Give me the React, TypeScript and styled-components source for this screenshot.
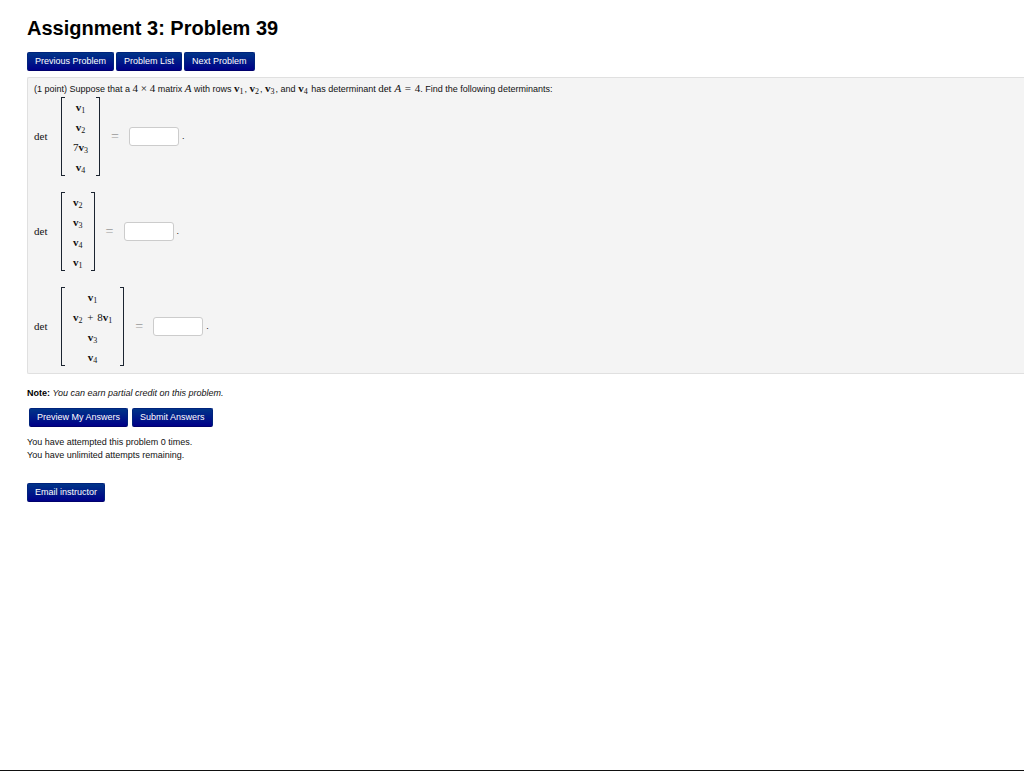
import React from "react";
import styled, { createGlobalStyle } from "styled-components";

const GlobalStyle = createGlobalStyle`
  *, *::before, *::after { box-sizing: border-box; }
  body {
    margin: 0;
    background: #fff;
    color: #111;
    font-family: "Liberation Sans", Arial, sans-serif;
    font-size: 9px;
    line-height: 13px;
  }
`;

const Page = styled.main`
  display: flex;
  flex-direction: column;
  align-items: flex-start;
  min-height: 100vh;
  padding: 16px 0 16px 27px;
  border-bottom: 1px solid #111;
`;

const Title = styled.h1`
  margin: 0 0 12px;
  color: #000;
  font-size: 20px;
  line-height: 24px;
`;

const ButtonRow = styled.div<{ $gap: number; $inset?: boolean }>`
  display: flex;
  gap: ${(p) => p.$gap}px;
  padding-left: ${(p) => (p.$inset ? 2 : 0)}px;
`;

const Button = styled.button`
  height: 19px;
  padding: 0 7px;
  border: 1px solid #00237c;
  border-bottom-color: #00006c;
  border-radius: 2px;
  background: linear-gradient(#003488, #000088);
  color: #fff;
  font: inherit;
  line-height: 17px;
  white-space: nowrap;
`;

const Panel = styled.section`
  align-self: stretch;
  margin: 6px 0 13px;
  padding: 5px 6px 7px;
  border: 1px solid #e0e0e0;
  border-right: 0;
  border-radius: 2px 0 0 2px;
  background: #f4f4f4;
`;

const Statement = styled.p`
  margin: 0 0 1px;
`;

const MathText = styled.span`
  color: #111;
  font-family: "Liberation Serif", "Times New Roman", serif;
  font-size: 11px;
  line-height: 1;
  white-space: nowrap;
`;

const Vector = styled(MathText)`
  padding-right: 1px;
`;

const Subscript = styled.sub`
  font-size: 8px;
  line-height: 0;
  vertical-align: -2px;
`;

const Infix = styled.span`
  padding: 0 1px;
`;

const Problems = styled.div`
  display: grid;
  gap: 16px;
`;

const Equation = styled.div`
  display: flex;
  align-items: center;
  height: 79px;
`;

const Operator = styled(MathText)`
  width: 27px;
`;

const Matrix = styled.span`
  display: flex;
  align-self: stretch;
`;

const Bracket = styled.span<{ $side: "left" | "right" }>`
  width: 4px;
  border: 1px solid #1b2430;
  border-${(p) => (p.$side === "left" ? "right" : "left")}: 0;
`;

const Entries = styled(MathText)`
  display: grid;
  grid-template-rows: repeat(4, 20px);
  align-items: center;
  padding: 0 7px 0 8px;
  text-align: center;
`;

const Equals = styled(MathText)`
  width: 29px;
  padding-left: 11px;
  color: #999;
  font-size: 14px;
`;

const Answer = styled.input`
  width: 50px;
  height: 19px;
  margin-right: 3px;
  padding: 2px 4px;
  border: 1px solid #ccc;
  border-radius: 3px;
  background: #fff;
  font: inherit;
`;

const Note = styled.p`
  margin: 0 0 8px;
  strong { color: #000; }
`;

const Attempts = styled.p`
  margin: 9px 0 21px;
`;

const V = ({ n }: { n: number }) => (
  <Vector><b>v</b><Subscript>{n}</Subscript></Vector>
);

const problems: React.ReactNode[][] = [
  [<V n={1} />, <V n={2} />, <>7<V n={3} /></>, <V n={4} />],
  [<V n={2} />, <V n={3} />, <V n={4} />, <V n={1} />],
  [<V n={1} />, <><V n={2} /> <Infix>+</Infix> 8<V n={1} /></>, <V n={3} />, <V n={4} />],
];

export default function App() {
  return (
    <>
      <GlobalStyle />
      <Page>
        <Title>Assignment 3: Problem 39</Title>
        <ButtonRow $gap={2}>
          <Button type="button">Previous Problem</Button>
          <Button type="button">Problem List</Button>
          <Button type="button">Next Problem</Button>
        </ButtonRow>
        <Panel>
          <Statement>
            (1 point) Suppose that a <MathText>4 × 4</MathText> matrix <MathText><i>A</i></MathText> with
            rows <V n={1} />, <V n={2} />, <V n={3} />, and <V n={4} /> has
            determinant <MathText>det <i>A</i> <Infix>=</Infix> 4</MathText>. Find the following determinants:
          </Statement>
          <Problems>
            {problems.map((rows, i) => (
              <Equation key={i}>
                <Operator>det</Operator>
                <Matrix>
                  <Bracket $side="left" />
                  <Entries>
                    {rows.map((row, j) => <span key={j}>{row}</span>)}
                  </Entries>
                  <Bracket $side="right" />
                </Matrix>
                <Equals>=</Equals>
                <Answer type="text" aria-label={`Determinant ${i + 1}`} />
                <span>.</span>
              </Equation>
            ))}
          </Problems>
        </Panel>
        <Note><strong>Note:</strong> <em>You can earn partial credit on this problem.</em></Note>
        <ButtonRow $gap={4} $inset>
          <Button type="button">Preview My Answers</Button>
          <Button type="button">Submit Answers</Button>
        </ButtonRow>
        <Attempts>
          You have attempted this problem 0 times.<br />
          You have unlimited attempts remaining.
        </Attempts>
        <Button type="button">Email instructor</Button>
      </Page>
    </>
  );
}
